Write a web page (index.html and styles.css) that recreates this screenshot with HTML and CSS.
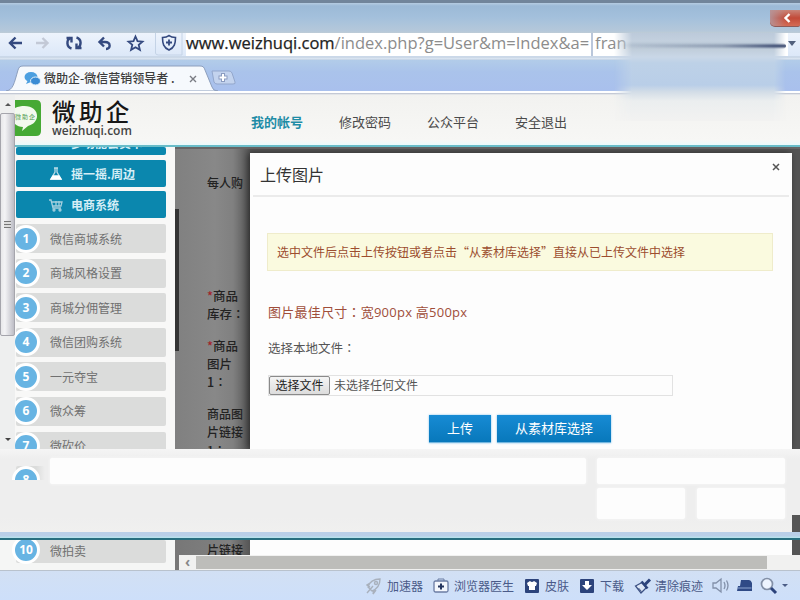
FILE: index.html
```html
<!DOCTYPE html>
<html lang="zh-CN">
<head>
<meta charset="utf-8">
<title>微助企-微信营销领导者</title>
<link rel="stylesheet" href="styles.css">
</head>
<body>
<div class="window">
  <div class="titlebar"><span class="close"><svg width="8" height="10" viewBox="0 0 8 10" fill="none" stroke="#fff" stroke-width="2.400"><path d="M6.500 1 2.500 5l4 4"/></svg></span></div>
  <div class="toolbar">
    <svg class="tools" width="186" height="26" viewBox="0 0 186 26" fill="none" stroke="#34497f" stroke-width="2.400">
      <path d="M22 10H10M15.500 4.500 10 10l5.500 5.500"/>
      <path d="M36 10h11M42.500 5l5 5-5 5" stroke="#c3c9d6"/>
      <path d="M71.500 15.500c-5-1.500-5.500-8-1-11M66.500 5h5v4.500M76.500 4.500c5 1.500 5.500 8 1 11M81.500 15h-5v-4.500"/>
      <path d="M104 4.500 99.500 9l4.500 4.500M100 9h5c6 0 6 7 1 7"/>
      <path d="M135.500 3.500l2 4.600 5 .5-3.800 3.300 1.200 4.900-4.400-2.600-4.400 2.600 1.200-4.900-3.800-3.300 5-.5z" stroke-width="1.800"/>
      <path d="M155.500 0v20q0 2 3 2h23.500V0" stroke="#c4d3e6" stroke-width="1"/>
      <path d="M169 2.500c2 1.800 4 2 6.500 2 0 6-1 10-6.500 12.500-5.500-2.500-6.500-6.500-6.500-12.500 2.500 0 4.500-.2 6.500-2z" stroke-width="1.600"/>
      <path d="M169 6.500v6M166 9.500h6" stroke-width="1.800"/>
    </svg>
    <div class="url"><b>www.weizhuqi.com</b>/index.php?g=User&amp;m=Index&amp;a=<i></i>fran</div>
    <span class="tri"></span>
  </div>
  <div class="tabs">
    <svg class="tabshape" width="250" height="31" viewBox="0 0 250 31">
      <path d="M6 31c7-1 8-7 12-21 1-3 2-4 5-4H200c3 0 4 1 5 4l7 17q1 4 6 4z" fill="#f6f9fd" stroke="#8d9fbd"/>
      <path d="M212 11h17q2 0 3 2l3 9q1 2-2 2h-16q-2 0-3-2z" fill="#c3d3ee" stroke="#93a7cc"/>
      <path d="M223 13v9M218.500 17.500h9" stroke="#8b9cc0" stroke-width="4"/><path d="M223 14v7M219.500 17.500h7" stroke="#fff" stroke-width="2"/>
      <ellipse cx="31" cy="17" rx="6.500" ry="5" fill="#4c9fe0"/><ellipse cx="35.500" cy="21" rx="5" ry="4" fill="#3a8bd4" stroke="#e4f1fb"/>
      <path d="M28 20l-2 4 5-2z" fill="#4c9fe0"/>
      <path d="M190 16l6 6M196 16l-6 6" stroke="#7a7c84" stroke-width="1.400"/>
    </svg>
    <span class="tabtext">微助企-微信营销领导者 .</span>
  </div>
  <div class="line"></div>
  <div class="page">
    <div class="vscroll">
      <span class="up"></span>
      <span class="thumb"><i></i></span>
      <span class="down"></span>
    </div>
    <div class="site">
      <div class="header">
        <svg width="28" height="36" viewBox="0 0 28 36">
          <path d="M0 0h21q5 0 5 5v26q0 5-5 5H0z" fill="#46a934"/>
          <path d="M0 8C12 3 23 8 22 17c-1 6-6 8-9 9l-6 5 1-4c-3 0-6-1-8-3z" fill="#f3faee"/>
          <text x="0" y="19" font-size="6" fill="#4f9c50" textLength="20">微助企</text>
        </svg>
        <div class="brand"><strong>微助企</strong><em>weizhuqi.com</em></div>
        <div class="nav"><a class="on">我的帐号</a><a>修改密码</a><a>公众平台</a><a>安全退出</a></div>
      </div>
      <div class="content">
        <div class="side">
          <div class="btn first"><svg width="100" height="6" viewBox="0 0 100 6" fill="none" stroke="#d9f0f7" stroke-width="1.500"><path d="M1 4l5-4"/></svg><span>多功能会员卡</span></div>
          <div class="btn"><svg width="14" height="14" viewBox="0 0 14 14" fill="none" stroke="#b9dce8" stroke-width="1.300"><path d="M5 1h4M6 1v4L2 12h10L8 5V1"/><path d="M4 9h6l2 3H2z" fill="#fff" stroke="#fff"/></svg><span>摇一摇.周边</span></div>
          <div class="btn"><svg width="14" height="14" viewBox="0 0 14 14" fill="none" stroke="#a5cfde" stroke-width="1.300"><path d="M0 2h2l2 8h8M3 4h10l-1 4H4M7 3v5M10 3v5"/><circle cx="5" cy="12" r="1"/><circle cx="11" cy="12" r="1"/></svg><span>电商系统</span></div>
          <div class="items">
            <div class="item"><b>1</b>微信商城系统</div>
            <div class="item"><b>2</b>商城风格设置</div>
            <div class="item"><b>3</b>商城分佣管理</div>
            <div class="item"><b>4</b>微信团购系统</div>
            <div class="item"><b>5</b>一元夺宝</div>
            <div class="item"><b>6</b>微众筹</div>
            <div class="item"><b>7</b>微砍价</div>
          </div>
        </div>
        <div class="form">
          <span class="track"></span>
          <div class="labels">
            <p class="l1">每人购</p>
            <p class="l2"><i>*</i>商品<br>库存<u lang="zh-TW">：</u></p>
            <p class="l3"><i>*</i>商品<br>图片<br>1<u lang="zh-TW">：</u></p>
            <p class="l4">商品图<br>片链接<br>1<u lang="zh-TW">：</u></p>
          </div>
        </div>
        <div class="modal">
          <div class="mhead"><span>上传图片</span><svg width="8" height="8" viewBox="0 0 8 8" stroke="#555" stroke-width="1.500"><path d="M1 1l6 6M7 1L1 7"/></svg></div>
          <div class="mbody">
            <div class="alert">选中文件后点击上传按钮或者点击“从素材库选择”直接从已上传文件中选择</div>
            <p class="size">图片最佳尺寸<u lang="zh-TW">：</u>宽900px 高500px</p>
            <p class="local">选择本地文件<u lang="zh-TW">：</u></p>
            <div class="file"><span class="pick">选择文件</span><span>未选择任何文件</span></div>
            <div class="actions"><span>上传</span><span class="lib">从素材库选择</span></div>
          </div>
        </div>
      </div>
    </div>
  </div>
  <div class="panel">
    <div class="p8"><div class="item"><b>8</b></div></div>
    <div class="box wide"></div>
    <div class="boxes"><div class="box full"></div><div class="box"></div><div class="box"></div></div>
    <span class="edge"></span>
  </div>
  <div class="band"></div>
  <div class="lower">
    <div class="lside"><div class="item"><b>10</b>微拍卖</div></div>
    <div class="lmain">
      <div class="lrow"><div class="lgrey">片链接</div><div class="lwhite"></div><div class="lend"></div></div>
      <div class="hscroll"><span>‹</span><i></i></div>
    </div>
  </div>
  <div class="status">
    <svg width="16" height="18" viewBox="0 0 16 18" fill="none" stroke="#a9b1bd" stroke-width="1.400"><path d="M2 10C3 5 8 2 14 2c0 6-3 10-8 12zM1 16l6-7M4 6L1 8l3 2M8 13l-1 4 3-4"/><circle cx="10" cy="6" r="1.500"/></svg><span class="s1">加速器</span>
    <svg width="16" height="18" viewBox="0 0 16 18"><rect x="1" y="4" width="14" height="11" rx="1.500" fill="#f4f7fd" stroke="#6b7ca3" stroke-width="1.300"/><path d="M5 4V2h6v2" fill="none" stroke="#6b7ca3"/><path d="M8 6.500v6M5 9.500h6" stroke="#26365f" stroke-width="2"/></svg><span class="s2">浏览器医生</span>
    <svg width="16" height="18" viewBox="0 0 16 18"><rect x="1" y="2" width="14" height="14" rx="1" fill="#2c437b"/><path d="M3 6l3-2q2 2 4 0l3 2-1 3h-1v4H5V9H4z" fill="#fff"/></svg><span class="s3">皮肤</span>
    <svg width="16" height="18" viewBox="0 0 16 18"><rect x="1" y="2" width="14" height="14" rx="1" fill="#2c437b"/><path d="M6 4h4v4h3l-5 5-5-5h3z" fill="#fff"/></svg><span class="s4">下载</span>
    <svg class="brush" width="18" height="18" viewBox="0 0 18 18"><path d="M1.500 9 8 5.500l4.500 5L7 16z" fill="#dce6f5" stroke="#3b5083" stroke-width="1.300"/><path d="M7.500 4.500l6 7" stroke="#2c437b" stroke-width="2.600"/><path d="M11 7.500l5-5" stroke="#2c437b" stroke-width="3"/><path d="M4.500 11l3 3.500" stroke="#3b5083"/></svg><span class="s5">清除痕迹</span>
    <svg class="snd" width="18" height="18" viewBox="0 0 18 18" fill="none" stroke="#8290a9" stroke-width="1.300"><path d="M1 6h3l5-4v13l-5-4H1zM12 5q2 4 0 7M14.500 3.500q3 5 0 10"/></svg>
    <svg class="win" width="17" height="18" viewBox="0 0 17 18"><path d="M5 3h8q2 0 3 3v8H1l1-5h2z" fill="#2f4a86"/><path d="M1.500 11h14" stroke="#8fa6d2"/></svg>
    <svg width="19" height="20" viewBox="0 0 19 20" fill="none"><circle cx="8" cy="8" r="5.500" fill="#edf4ff" stroke="#8390a7" stroke-width="1.700"/><path d="M12 12l5 5" stroke="#2c437b" stroke-width="3"/></svg>
    <i class="caret"></i>
  </div>
  <div class="smear"></div>
  <div class="streak"></div>
</div>
</body>
</html>
```

FILE: styles.css
```css
* { box-sizing: border-box; }
body { margin: 0; }
p { margin: 0; }
i, em { font-style: normal; }
u { text-decoration: none; font-family: "Noto Sans CJK TC", sans-serif; }
.window { position: relative; width: 800px; height: 600px; overflow: hidden; display: flex; flex-direction: column; background: #f4f4f2; font: 12px/18px "Noto Sans CJK SC", sans-serif; color: #555; }
.window > div { flex: none; }
.titlebar { height: 33px; border-top: 3px solid #71859b; background: linear-gradient(#b5cce2 0, #9cbad7 3px, #a3c0dc 14px, #b5c8da 28px, #becbd6); display: flex; justify-content: flex-end; }
.close { width: 30px; height: 17px; margin: 7px 0 0 0; background: linear-gradient(90deg, rgba(180,150,155,.9), transparent 16px), linear-gradient(#c98478, #c24a38 50%, #d46b55); border-bottom: 1px solid #8e5a58; border-radius: 0 0 2px 5px; padding: 3px 0 0 13px; }
.close svg { display: block; }
.toolbar { height: 27px; display: flex; background: linear-gradient(#edf3fc, #dce8f8 23px, #b9c8da 24px, #e0eaf5 25px, #c1d1e4); }
.tools { flex: none; }
.url { width: 602px; height: 23px; background: #fff; font: 16.500px/20px "Open Sans", sans-serif; color: #8c8c8c; white-space: nowrap; }
.url b { font-weight: 400; color: #222; -webkit-text-stroke: .25px #222; }
.url i { display: inline-block; width: 2px; height: 23px; background: #bac7db; vertical-align: top; margin: 0 2px 0 2px; }
.tri { border: 4px solid transparent; border-top: 5px solid #52607c; margin: 8px 0 0 0; height: 0; }
.tabs { height: 31px; background: linear-gradient(#b2cce9, #aac3eb 12px, #a9c0ed); position: relative; }
.tabshape { display: block; }
.tabtext { position: absolute; left: 44px; top: 9px; font-size: 12px; line-height: 18px; color: #3c3c3c; white-space: nowrap; font-weight: 500; }
.line { height: 4px; background: linear-gradient(#fff 0 2px, #c4c9d5 2px 3px, #e2e5e9 3px); }
.page { height: 354px; display: flex; }
.vscroll { width: 15px; background: #eeefef; display: flex; flex-direction: column; align-items: center; }
.up { border: 3px solid transparent; border-bottom-color: #555; margin-top: 5px; }
.thumb { width: 15px; height: 223px; margin-top: 7px; border: 1px solid #a5a5ac; border-radius: 2px; background: linear-gradient(90deg, #e8e8ea, #f3f3f5 30%, #bdbdc5); display: flex; align-items: center; justify-content: center; }
.thumb i { width: 7px; height: 7px; background: repeating-linear-gradient(#777 0 1px, #ddd 1px 3px); }
.down { border: 3px solid transparent; border-top-color: #444; margin-top: 102px; }
.site { width: 785px; display: flex; flex-direction: column; }
.header { height: 52px; background: linear-gradient(#f2f2f0, #f7f7f5 45px, #eafafb 50px); border-bottom: 2px solid #68bdc9; display: flex; padding-top: 5px; }
.brand { width: 208px; padding-left: 9px; display: flex; flex-direction: column; }
.brand strong { font-size: 23.500px; line-height: 23px; font-weight: 500; letter-spacing: 3.4px; color: #161616; }
.brand em { font: 600 12px/15px "Open Sans", sans-serif; color: #444; }
.nav { display: flex; gap: 36px; font-size: 13px; line-height: 22px; padding-top: 11px; color: #4a4a4a; }
.nav .on { color: #1e8ca6; font-weight: 700; }
.content { height: 302px; display: flex; position: relative; overflow: hidden; }
.side { width: 160px; padding-left: 1px; background: #f8f8f7; display: flex; flex-direction: column; }
.btn { flex: none; width: 150px; height: 27px; margin-bottom: 4px; border-radius: 2px; background: #0b87ae; color: #d5eef6; font-weight: 700; font-size: 12px; line-height: 27px; display: flex; align-items: center; padding-left: 33px; gap: 8px; }
.btn.first { height: 8px; margin-bottom: 5px; overflow: hidden; align-items: flex-start; }
.btn.first svg { flex: none; width: 14px; }
.btn.first span { line-height: 18px; margin-top: -13px; }
.items { display: flex; flex-direction: column; gap: 5.600px; padding-top: 2px; }
.item { flex: none; width: 150px; height: 29px; background: #dbdcdb; border-radius: 2px; display: flex; align-items: center; color: #707070; }
.item b { flex: none; width: 28px; height: 28px; margin: 0 10px 0 -4px; border: 3px solid #fff; border-radius: 50%; background: #67b4e3; color: #fff; font: bold 12px/21px "Open Sans", sans-serif; text-align: center; }
.form { width: 625px; background: linear-gradient(90deg, #808080, #888 40px, #808080 58px, #555 75px, #555); display: flex; border-top: 2px solid #666; }
.track { width: 4px; height: 142px; margin-top: 60px; background: #343434; }
.labels { padding: 25px 0 0 28px; width: 71px; font-weight: 500; font-size: 12.500px; color: #222; white-space: nowrap; }
.labels i { color: #a3262b; }
.l1, .l4 { font-size: 12px; }
.l2 { margin-top: 95px; }
.l3, .l4 { margin-top: 14px; }
.l4 { line-height: 18px; }
.modal { position: absolute; left: 235px; top: 6px; width: 542px; height: 296px; background: #fdfdfd; box-shadow: -2px 0 7px rgba(0,0,0,.5); }
.mhead { height: 44px; margin: 0 3px; border-bottom: 2px solid #ebebeb; display: flex; justify-content: space-between; padding: 10px 9px 0 7px; font-size: 16px; line-height: 22px; color: #333; }
.mbody { padding: 36px 19px 0 17px; }
.alert { height: 38px; border: 1px solid #efeccb; background: #fafadf; color: #9c4d2e; line-height: 35px; padding-left: 9px; white-space: nowrap; }
.size { margin: 32px 0 0 1px; font: 13px/18px "Open Sans", "Noto Sans CJK SC", sans-serif; letter-spacing: .24px; color: #a04e3a; white-space: nowrap; }
.local { margin: 18px 0 0 1px; font-size: 12.500px; color: #555; }
.file { margin: 18px 0 0 1px; width: 405px; height: 21px; border: 1px solid #e2e2e2; display: flex; line-height: 18px; gap: 4px; }
.pick { width: 61px; height: 19px; border: 1px solid #8a8a8a; border-radius: 2px; background: linear-gradient(#f5f5f5, #dcdcdc); color: #222; text-align: center; line-height: 16px; }
.actions { display: flex; gap: 6px; padding: 19px 0 0 162px; }
.actions span { width: 62px; height: 28px; background: linear-gradient(#178bd4, #0878bb); border-bottom: 1px solid #75b7df; box-shadow: 0 0 2px #83c5ef; color: #fff; text-align: center; font-size: 13px; line-height: 26px; }
.actions .lib { width: 114px; }
.panel { height: 83px; background: linear-gradient(#f5f5f5, #eee 10px 68px, #f0f0ef); display: flex; padding-top: 9px; }
.p8 { width: 50px; height: 22px; padding: 8px 0 0 16px; overflow: hidden; }
.p8 .item { width: 29px; background: linear-gradient(90deg, #dbdcdb 20px, #eee); }
.p8 .item b { margin-top: -2px; }
.box { background: #fdfdfd; border-radius: 2px; box-shadow: 0 0 3px #fafafa; }
.wide { width: 536px; height: 26px; }
.boxes { width: 188px; margin-left: 11px; display: grid; grid-template-columns: 88px 88px; grid-template-rows: 26px 31px; gap: 4px 12px; height: 61px; }
.full { grid-column: 1 / 3; }
.edge { width: 8px; height: 17px; margin: 57px 0 0 7px; background: #555; }
.band { height: 8px; background: linear-gradient(#b9cfe8 0 4px, #b8e0ed 5px, #b8e0ed 6px, #286f80 6px); }
.lower { height: 31px; display: flex; border-bottom: 1px solid #b9c2cd; }
.lside { width: 175px; padding-left: 16px; height: 30px; overflow: hidden; background: #f5f6f5; }
.lside .item { height: 23px; padding-bottom: 2px; }
.lside .item b { margin-top: -2px; }
.lmain { width: 625px; }
.lrow { display: flex; height: 15px; }
.lgrey { width: 75px; padding-left: 32px; font: 500 12px/19px "Noto Sans CJK SC", sans-serif; color: #222; background: linear-gradient(90deg, #777, #808080 55px, #555); overflow: hidden; white-space: nowrap; }
.lwhite { width: 542px; background: #fdfdfd; }
.lend { width: 8px; background: #555; }
.hscroll { height: 15px; display: flex; border-left: 4px solid #777; background: #f1f1f0; }
.hscroll span { width: 17px; text-align: center; font: bold 14px/13px "Open Sans", sans-serif; color: #888; }
.hscroll i { width: 571px; height: 13px; margin-top: 1px; background: #bdbdba; }
.status { height: 29px; background: linear-gradient(#d2e0f4, #cddffa); display: flex; align-items: center; padding: 1px 0 0 366px; color: #4a5a88; white-space: nowrap; }
.status svg { flex: none; margin-right: 5px; }
.status .s1 { width: 46px; }
.status .s2 { width: 70px; }
.status .s3 { width: 34px; }
.status .s4 { width: 34px; }
.status .s5 { width: 57px; }
.status .brush { margin-right: 3px; }
.status .snd { margin-right: 6px; }
.status .win { margin-right: 6px; }
.caret { border: 3px solid transparent; border-top-color: #4b5c86; margin: 1px 0 0 -1px; }
.smear { position: absolute; left: 614px; top: 33px; width: 172px; height: 88px; background: linear-gradient(#bccada, #c3d0de 8px, #b4c2d2 12px, #c0cdda 16px, #c9d7e7 24px, #bdd1e7 30px, #b9cee8 52px, #d3dde7 59px, #ebeeef 68px, #f2f2f1); -webkit-mask-image: linear-gradient(90deg, transparent, #000 18px, #000 160px, transparent); }
.streak { position: absolute; left: 626px; top: 43px; width: 160px; height: 6px; border-radius: 3px; background: linear-gradient(90deg, transparent, rgba(115,130,155,.6) 60%, #34436a 97%); -webkit-mask-image: linear-gradient(transparent, #000 50%, transparent); }
```
